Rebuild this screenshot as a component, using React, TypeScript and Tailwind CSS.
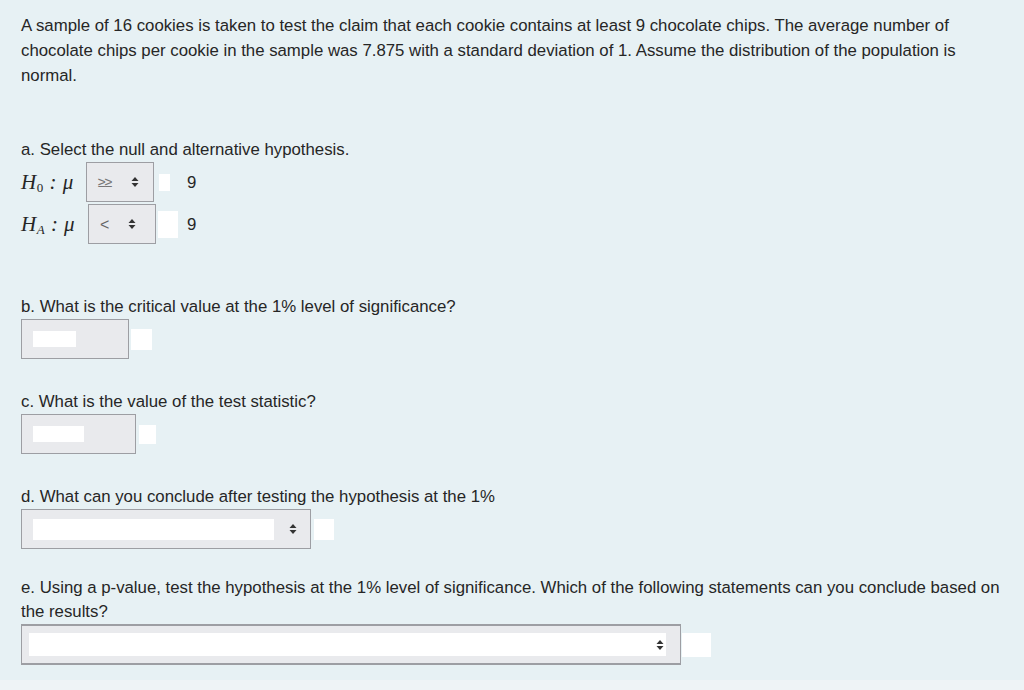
import React from "react";

function Arrows({ className = "" }: { className?: string }) {
  return (
    <svg width="8" height="12" viewBox="0 0 8 12" className={className}>
      <path d="M4 1 L7.5 5 H0.5 Z" fill="#333" />
      <path d="M4 11 L7.5 7 H0.5 Z" fill="#333" />
    </svg>
  );
}

function Blank({ className = "" }: { className?: string }) {
  return <div className={`bg-white ${className}`} />;
}

const serif = { fontFamily: '"Liberation Serif", "Times New Roman", serif' };

export default function App() {
  return (
    <div
      className="w-[1024px] h-[690px] flex flex-col bg-[#eef3f6] text-[#262626] overflow-hidden"
      style={{ fontFamily: '"Liberation Sans", Arial, sans-serif' }}
    >
      <div className="h-[680px] bg-[#e7f1f4] px-[21px] pt-[13px] text-[16.8px] leading-[25px] whitespace-nowrap">
        <p>
          A sample of 16 cookies is taken to test the claim that each cookie contains at least 9 chocolate chips. The average number of
          <br />
          chocolate chips per cookie in the sample was 7.875 with a standard deviation of 1. Assume the distribution of the population is
          <br />
          normal.
        </p>

        {/* a */}
        <p className="mt-[49px]">a. Select the null and alternative hypothesis.</p>
        <div className="mt-[0px] flex items-center h-[40px]">
          <span className="w-[65px] text-[21px] italic tracking-[0.5px]" style={serif}>
            H<sub className="text-[13px] not-italic">0</sub> : μ
          </span>
          <div className="w-[68px] h-[40px] bg-[#e9eaed] border border-[#9d9ea3] flex items-center pl-[11px] gap-[9px]">
            <span className="text-[14px] text-[#777] tracking-[-1px] w-[24px]">≥≥</span>
            <Arrows />
          </div>
          <Blank className="w-[11px] h-[17px] ml-[5px]" />
          <span className="ml-[17px]">9</span>
        </div>
        <div className="mt-[2px] flex items-center h-[40px]">
          <span className="w-[67px] text-[21px] italic tracking-[0.5px]" style={serif}>
            H<sub className="text-[13px]">A</sub> : μ
          </span>
          <div className="w-[68px] h-[40px] bg-[#e9eaed] border border-[#9d9ea3] flex items-center pl-[11px] gap-[18px]">
            <span className="text-[16px] text-[#666] w-[10px]">&lt;</span>
            <Arrows />
          </div>
          <Blank className="w-[20px] h-[27px] ml-[2px]" />
          <span className="ml-[9px]">9</span>
        </div>

        {/* b */}
        <p className="mt-[50px]">b. What is the critical value at the 1% level of significance?</p>
        <div className="mt-[0px] flex items-center">
          <div className="w-[108px] h-[40px] bg-[#e9eaed] border border-[#9d9ea3] flex items-center pl-[11px]">
            <Blank className="w-[43px] h-[16px]" />
          </div>
          <Blank className="w-[21px] h-[21px] ml-[2px]" />
        </div>

        {/* c */}
        <p className="mt-[30px]">c. What is the value of the test statistic?</p>
        <div className="mt-[0px] flex items-center">
          <div className="w-[115px] h-[40px] bg-[#e9eaed] border border-[#9d9ea3] flex items-center pl-[11px]">
            <Blank className="w-[51px] h-[16px]" />
          </div>
          <Blank className="w-[17px] h-[19px] ml-[3px]" />
        </div>

        {/* d */}
        <p className="mt-[30px]">d. What can you conclude after testing the hypothesis at the 1%</p>
        <div className="mt-[0px] flex items-center">
          <div className="w-[290px] h-[40px] bg-[#e9eaed] border border-[#9d9ea3] flex items-center pl-[11px]">
            <Blank className="w-[241px] h-[21px]" />
            <Arrows className="ml-[15px]" />
          </div>
          <Blank className="w-[20px] h-[21px] ml-[3px]" />
        </div>

        {/* e */}
        <p className="mt-[27px] leading-[24px]">
          e. Using a p-value, test the hypothesis at the 1% level of significance. Which of the following statements can you conclude based on
          <br />
          the results?
        </p>
        <div className="mt-[0px] flex items-center">
          <div className="w-[660px] h-[41px] bg-[#e9eaed] border border-[#9d9ea3] border-t-2 border-b-2 flex items-center pl-[7px]">
            <Blank className="w-[637px] h-[23px]" />
            <Arrows className="ml-[-10px]" />
          </div>
          <Blank className="w-[29px] h-[24px] ml-[1px]" />
        </div>
      </div>
    </div>
  );
}
